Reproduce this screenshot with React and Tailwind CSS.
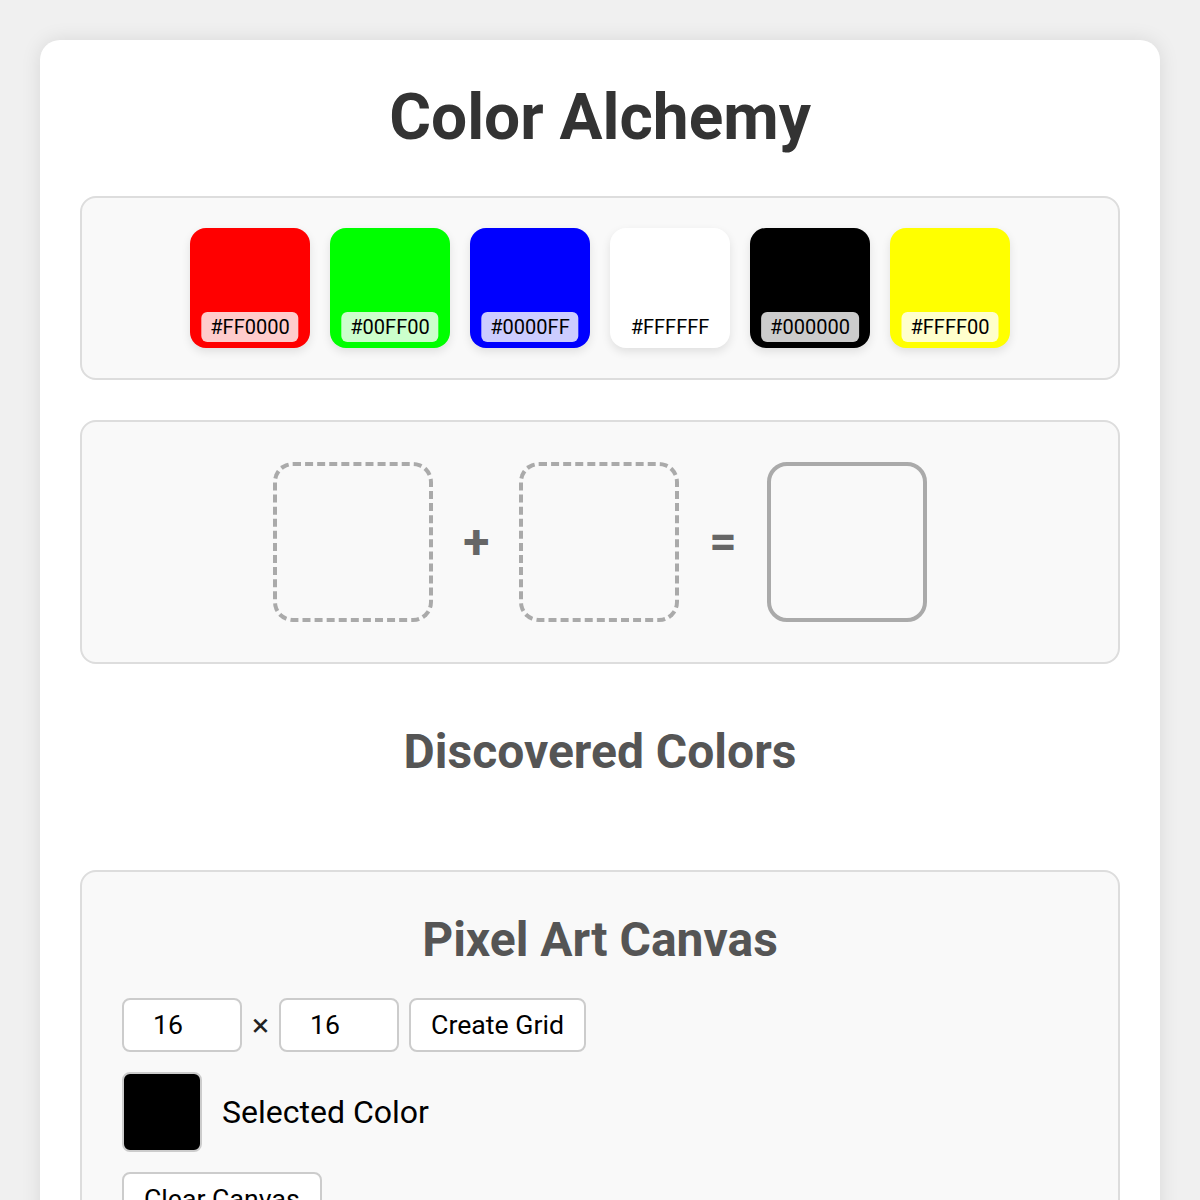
import React, { useState } from "react";

const BASE_COLORS = [
  { hex: "#FF0000", label: "bg-[rgba(255,255,255,0.8)]" },
  { hex: "#00FF00", label: "bg-[rgba(255,255,255,0.8)]" },
  { hex: "#0000FF", label: "bg-[rgba(255,255,255,0.8)]" },
  { hex: "#FFFFFF", label: "bg-[rgba(255,255,255,0.8)]" },
  { hex: "#000000", label: "bg-[rgba(255,255,255,0.8)]" },
  { hex: "#FFFF00", label: "bg-[rgba(255,255,255,0.8)]" },
];

const Swatch = ({ hex, label }) => (
  <div
    className="relative w-[120px] h-[120px] rounded-[16px] shadow-[0_4px_10px_rgba(0,0,0,0.1)] cursor-grab"
    style={{ backgroundColor: hex }}
  >
    <span
      className={"absolute bottom-[6px] left-1/2 -translate-x-1/2 px-[9px] py-[3px] rounded-[6px] text-[20px] leading-[24px] text-black " + label}
    >
      {hex}
    </span>
  </div>
);

const DropSlot = () => (
  <div className="w-[160px] h-[160px] rounded-[20px] border-4 border-dashed border-[#aaa]" />
);

export default function App() {
  const [rows, setRows] = useState("16");
  const [cols, setCols] = useState("16");
  const [selected] = useState("#000000");

  return (
    <div className="min-h-screen bg-[#f0f0f0] pt-[40px] font-['Roboto',_'Liberation_Sans',_sans-serif]">
      <div className="w-[1120px] mx-auto bg-white rounded-[20px] shadow-[0_0_20px_rgba(0,0,0,0.1)] p-[40px]">
        <h1 className="text-center text-[64px] leading-[76px] font-bold text-[#333] mb-[40px]">
          Color Alchemy
        </h1>

        {/* base palette */}
        <div className="flex justify-center gap-[20px] p-[30px] bg-[#f9f9f9] border-2 border-[#ddd] rounded-[16px] mb-[40px]">
          {BASE_COLORS.map((c) => (
            <Swatch key={c.hex} hex={c.hex} label={c.label} />
          ))}
        </div>

        {/* mixing area */}
        <div className="flex justify-center items-center gap-[30px] p-[40px] bg-[#f9f9f9] border-2 border-[#ddd] rounded-[16px]">
          <DropSlot />
          <span className="text-[48px] leading-[56px] font-bold text-[#666]">+</span>
          <DropSlot />
          <span className="text-[48px] leading-[56px] font-bold text-[#666]">=</span>
          <div className="w-[160px] h-[160px] rounded-[20px] border-4 border-[#aaa]" />
        </div>

        <h2 className="mt-[60px] text-center text-[48px] leading-[56px] font-bold text-[#555]">
          Discovered Colors
        </h2>
        <div className="h-[90px]" />

        {/* pixel art */}
        <div className="p-[40px] bg-[#f9f9f9] border-2 border-[#ddd] rounded-[16px]">
          <h2 className="text-center text-[48px] leading-[56px] font-bold text-[#555] mb-[30px]">
            Pixel Art Canvas
          </h2>
          <div className="flex items-center gap-[10px]">
            <input
              value={rows}
              onChange={(e) => setRows(e.target.value)}
              className="w-[120px] h-[54px] pl-[29px] bg-white border-2 border-[#ccc] rounded-[8px] text-[26.67px] text-black outline-none"
            />
            <span className="text-[32px] text-[#222]">×</span>
            <input
              value={cols}
              onChange={(e) => setCols(e.target.value)}
              className="w-[120px] h-[54px] pl-[29px] bg-white border-2 border-[#ccc] rounded-[8px] text-[26.67px] text-black outline-none"
            />
            <button className="h-[54px] px-[20px] bg-white border-2 border-[#ccc] rounded-[8px] text-[26.67px] text-black">
              Create Grid
            </button>
          </div>
          <div className="flex items-center gap-[20px] mt-[20px]">
            <div
              className="w-[80px] h-[80px] border-2 border-[#ccc] rounded-[8px]"
              style={{ backgroundColor: selected }}
            />
            <span className="text-[32px] text-black">Selected Color</span>
          </div>
          <button className="mt-[20px] h-[54px] px-[20px] bg-white border-2 border-[#ccc] rounded-[8px] text-[26.67px] text-black">
            Clear Canvas
          </button>
          <div className="mt-[20px] grid grid-cols-[repeat(16,30px)] w-fit border-2 border-[#ccc]">
            {Array.from({ length: 256 }).map((_, i) => (
              <div key={i} className="w-[30px] h-[30px] bg-white border border-[#eee]" />
            ))}
          </div>
        </div>
      </div>
    </div>
  );
}
